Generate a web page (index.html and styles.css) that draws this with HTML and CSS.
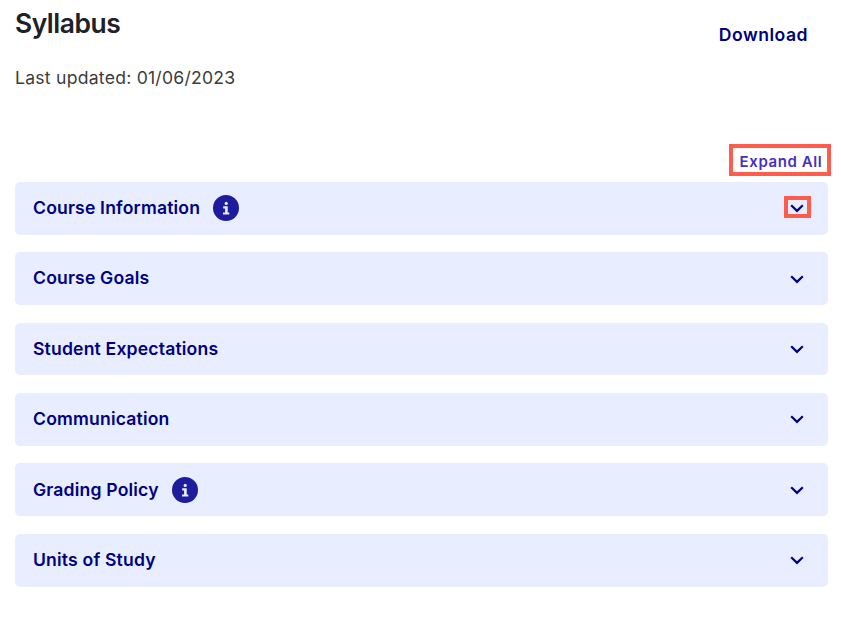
FILE: index.html
```html
<!DOCTYPE html>
<html lang="en">
<head>
	<meta charset="UTF-8">
	<meta name="viewport" content="width=device-width, initial-scale=1.0">
	<title>Syllabus</title>
	<link rel="stylesheet" href="styles.css">
</head>
<body>
	<svg class="defs">
		<symbol id="chevron" viewBox="0 0 14 9">
			<path d="M1.2 1.3 7 6.9l5.8-5.6" fill="none" stroke="currentColor" stroke-width="2.2"/>
		</symbol>
		<symbol id="info" viewBox="0 0 26 26">
			<circle cx="13" cy="13" r="13" fill="#1c1c9c"/>
			<circle cx="13.2" cy="8.4" r="1.6" fill="#e8eeff"/>
			<path d="M10.2 11.3h4.5v6.2h1.6v2.1h-6.3v-2.1h2.1v-4.1h-1.9z" fill="#e8eeff"/>
		</symbol>
	</svg>
	<header>
		<h1>Syllabus</h1>
		<a class="download">Download</a>
	</header>
	<p class="updated">Last updated: 01/06/2023</p>
	<div class="actions">
		<button class="expand">Expand All</button>
	</div>
	<main>
		<div class="section">
			<h2>Course Information</h2>
			<svg class="info"><use href="#info"/></svg>
			<span class="toggle marked"><svg><use href="#chevron"/></svg></span>
		</div>
		<div class="section">
			<h2>Course Goals</h2>
			<span class="toggle"><svg><use href="#chevron"/></svg></span>
		</div>
		<div class="section">
			<h2>Student Expectations</h2>
			<span class="toggle"><svg><use href="#chevron"/></svg></span>
		</div>
		<div class="section">
			<h2>Communication</h2>
			<span class="toggle"><svg><use href="#chevron"/></svg></span>
		</div>
		<div class="section">
			<h2>Grading Policy</h2>
			<svg class="info"><use href="#info"/></svg>
			<span class="toggle"><svg><use href="#chevron"/></svg></span>
		</div>
		<div class="section">
			<h2>Units of Study</h2>
			<span class="toggle"><svg><use href="#chevron"/></svg></span>
		</div>
	</main>
</body>
</html>
```
FILE: styles.css
```css
* {
	box-sizing: border-box;
}
body {
	margin: 0;
	padding: 8px 13px 0 15px;
	background-color: white;
	font-family: Inter, "Liberation Sans", sans-serif;
	color: #202028;
}
h1, h2, p {
	margin: 0;
}
.defs {
	display: none;
}
header {
	display: flex;
	justify-content: space-between;
	height: 56px;
	padding-right: 20px;
}
h1 {
	font-size: 26.4px;
	font-weight: 600;
	line-height: 31px;
	letter-spacing: -0.45px;
}
.download {
	margin-top: 15px;
	font-size: 17.6px;
	font-weight: 600;
	line-height: 24px;
	letter-spacing: 0.5px;
	color: #000080;
}
.updated {
	height: 80px;
	font-size: 17.6px;
	line-height: 28px;
	letter-spacing: 0.24px;
	color: #3c3c3c;
}
.actions {
	display: flex;
	justify-content: flex-end;
	height: 38px;
	margin-right: -3px;
}
.expand {
	width: 102px;
	height: 32px;
	padding: 2px 0 0 2px;
	border: 4px solid #ff5c4d;
	background: none;
	font-family: inherit;
	font-size: 15px;
	font-weight: 600;
	letter-spacing: 0.6px;
	white-space: nowrap;
	color: #4430c0;
}
main {
	display: flex;
	flex-direction: column;
	gap: 17.55px;
}
.section {
	display: flex;
	align-items: center;
	height: 52.8px;
	padding: 0 17px 0 18px;
	border-radius: 5px;
	background-color: #e8eeff;
	color: #000080;
}
.section h2 {
	margin-bottom: 0.55px;
	font-size: 17.6px;
	font-weight: 600;
	line-height: 24px;
	letter-spacing: 0.17px;
}
.info {
	width: 26px;
	height: 26px;
	margin-left: 13px;
}
.toggle {
	display: flex;
	align-items: center;
	justify-content: center;
	width: 27px;
	height: 22px;
	margin-left: auto;
}
.toggle svg {
	width: 14px;
	height: 9px;
	margin: 1px 1px 0 0;
}
.marked {
	border: 4px solid #ff5c4d;
	margin-top: -2px;
}
.marked svg {
	margin-top: 2px;
}
```
